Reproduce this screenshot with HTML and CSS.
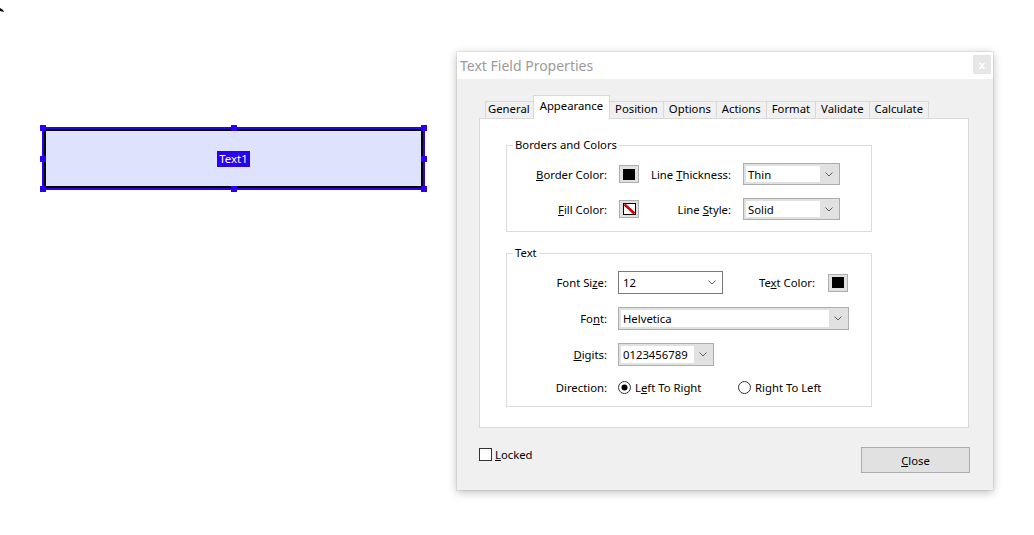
FILE: index.html
```html
<!DOCTYPE html>
<html>
<head>
<meta charset="utf-8">
<title>Text Field Properties</title>
<link rel="stylesheet" href="styles.css">
</head>
<body>
<div class="page">
  <svg class="cursor" width="5" height="5" viewBox="0 0 5 5"><polygon points="0,0 3,2 4,4 0,3" fill="#000"/></svg>

  <div class="field">
    <div class="field-inner"><span class="field-label">Text1</span></div>
    <span class="handle h-tl"></span><span class="handle h-tc"></span><span class="handle h-tr"></span>
    <span class="handle h-ml"></span><span class="handle h-mr"></span>
    <span class="handle h-bl"></span><span class="handle h-bc"></span><span class="handle h-br"></span>
  </div>

  <div class="dialog">
    <div class="titlebar">
      <span class="title">Text Field Properties</span>
      <span class="xbtn">x</span>
    </div>
    <div class="dlg-body">
      <div class="tabs">
        <span class="tab first">General</span>
        <span class="tab active">Appearance</span>
        <span class="tab">Position</span>
        <span class="tab">Options</span>
        <span class="tab">Actions</span>
        <span class="tab">Format</span>
        <span class="tab">Validate</span>
        <span class="tab">Calculate</span>
      </div>
      <div class="panel">
        <fieldset class="group g1">
          <legend>Borders and Colors</legend>
          <div class="grid1">
            <span class="lbl"><u>B</u>order Color:</span>
            <span class="swatch"><span class="chip"></span></span>
            <span class="lbl">Line <u>T</u>hickness:</span>
            <span class="combo"><span class="val">Thin</span><span class="arrow"><svg width="8" height="5" viewBox="0 0 8 5"><polyline points="0.5,0.5 4,4 7.5,0.5" fill="none" stroke="#606060" stroke-width="1"/></svg></span></span>

            <span class="lbl"><u>F</u>ill Color:</span>
            <span class="swatch"><svg width="13" height="12" viewBox="0 0 13 12"><rect x="0.5" y="0.5" width="12" height="11" fill="#fff" stroke="#000"/><line x1="1.5" y1="1.5" x2="11.5" y2="10.5" stroke="#d40000" stroke-width="2.6"/></svg></span>
            <span class="lbl">Line <u>S</u>tyle:</span>
            <span class="combo"><span class="val">Solid</span><span class="arrow"><svg width="8" height="5" viewBox="0 0 8 5"><polyline points="0.5,0.5 4,4 7.5,0.5" fill="none" stroke="#606060" stroke-width="1"/></svg></span></span>
          </div>
        </fieldset>

        <fieldset class="group g2">
          <legend>Text</legend>
          <div class="grid2">
            <span class="lbl">Font Si<u>z</u>e:</span>
            <div class="rowc">
              <span class="combo edit size"><span class="val">12</span><span class="arrow"><svg width="8" height="5" viewBox="0 0 8 5"><polyline points="0.5,0.5 4,4 7.5,0.5" fill="none" stroke="#606060" stroke-width="1"/></svg></span></span>
              <span class="lbl tc">Te<u>x</u>t Color:</span>
              <span class="swatch"><span class="chip"></span></span>
            </div>

            <span class="lbl">Fo<u>n</u>t:</span>
            <span class="combo font"><span class="val">Helvetica</span><span class="arrow"><svg width="8" height="5" viewBox="0 0 8 5"><polyline points="0.5,0.5 4,4 7.5,0.5" fill="none" stroke="#606060" stroke-width="1"/></svg></span></span>

            <span class="lbl"><u>D</u>igits:</span>
            <div class="rowc">
              <span class="combo digits"><span class="val">0123456789</span><span class="arrow"><svg width="8" height="5" viewBox="0 0 8 5"><polyline points="0.5,0.5 4,4 7.5,0.5" fill="none" stroke="#606060" stroke-width="1"/></svg></span></span>
            </div>

            <span class="lbl">Direction:</span>
            <div class="rowc">
              <span class="opt first"><svg width="13" height="13" viewBox="0 0 13 13"><circle cx="6.5" cy="6.5" r="6" fill="#fff" stroke="#333"/><circle cx="6.5" cy="6.5" r="3" fill="#000"/></svg><span>L<u>e</u>ft To Right</span></span>
              <span class="opt"><svg width="13" height="13" viewBox="0 0 13 13"><circle cx="6.5" cy="6.5" r="6" fill="#fff" stroke="#333"/></svg><span>Ri<u>g</u>ht To Left</span></span>
            </div>
          </div>
        </fieldset>
      </div>
      <div class="footer">
        <span class="check"><span class="box"></span><span><u>L</u>ocked</span></span>
        <span class="btn"><span><u>C</u>lose</span></span>
      </div>
    </div>
  </div>
</div>
</body>
</html>
```

FILE: styles.css
```css
* { box-sizing: border-box; }
html, body { margin: 0; padding: 0; background: #fff; }
body {
  font-family: "Noto Sans", "DejaVu Sans", sans-serif;
  font-size: 11.3px;
  color: #000;
}
u { text-decoration: underline; text-underline-offset: 1px; }

.page { position: relative; width: 1034px; height: 535px; overflow: hidden; }
.cursor { position: absolute; left: 0; top: 8px; }

/* form field on the canvas */
.field {
  position: absolute;
  left: 42px; top: 127px;
  width: 383px; height: 63px;
  border: 2px solid #2a00f0;
}
.field-inner {
  width: 100%; height: 100%;
  border: 2px solid #000;
  background: #dee2fd;
  display: flex; align-items: center; justify-content: center;
}
.field-label {
  background: #2a00f0; color: #fff;
  font-size: 11.5px; line-height: 16px; padding: 0 2px;
}
.handle { position: absolute; width: 6px; height: 6px; background: #2a00f0; }
.h-tl { left: -4px; top: -4px; }
.h-tc { left: calc(50% - 3px); top: -4px; }
.h-tr { right: -4px; top: -4px; }
.h-ml { left: -4px; top: calc(50% - 3px); }
.h-mr { right: -4px; top: calc(50% - 3px); }
.h-bl { left: -4px; bottom: -4px; }
.h-bc { left: calc(50% - 3px); bottom: -4px; }
.h-br { right: -4px; bottom: -4px; }

/* dialog window */
.dialog {
  position: absolute;
  left: 457px; top: 52px;
  width: 536px; height: 438px;
  background: #f0f0f0;
  box-shadow: 0 0 0 1px rgba(0,0,0,0.06), 0 2px 9px rgba(0,0,0,0.28);
  display: flex; flex-direction: column;
}
.titlebar {
  height: 27px; background: #fff;
  display: flex; align-items: center;
  padding: 0 2px 0 3px;
}
.title { font-size: 14px; color: #9b9b9b; line-height: 20px; }
.xbtn {
  margin-left: auto; align-self: flex-start; margin-top: 3px;
  width: 18px; height: 19px; background: #e6e6e6;
  color: #fff; font-size: 11px; font-weight: bold;
  display: flex; align-items: center; justify-content: center;
  line-height: 1;
}
.dlg-body { padding: 16px 24px 0 22px; display: flex; flex-direction: column; }

.tabs { display: flex; align-items: flex-end; height: 23px; padding-left: 6px; }
.tab {
  height: 17px; line-height: 14px;
  border: 1px solid #d9d9d9; border-bottom: 0;
  padding: 0 5px; background: #f0f0f0;
  margin-left: -1px; white-space: nowrap;
}
.tab.first { margin-left: 0; padding: 0 3px 0 2px; }
.tab.active {
  height: 24px; line-height: 19px;
  background: #fff; padding: 0 6px;
  margin-bottom: -1px; position: relative; z-index: 1;
}

.panel {
  height: 310px; background: #fff;
  border: 1px solid #d9d9d9;
  padding: 18px 0 0 26px;
}
.group {
  margin: 0; padding: 0; min-width: 0;
  width: 366px;
  border: 1px solid #dcdcdc;
}
.group legend { margin-left: 6px; padding: 0 2px; line-height: 16px; }
.g1 { height: 95px; }
.g2 { height: 162px; margin-top: 13px; }

.lbl { text-align: right; white-space: nowrap; }

.grid1 {
  display: grid;
  grid-template-columns: 100px 20px 80px 97px;
  grid-auto-rows: 22px;
  column-gap: 12px; row-gap: 13px;
  align-items: center;
  padding-top: 10px;
}
.grid1 .lbl { padding-top: 1px; }
.grid2 {
  display: grid;
  grid-template-columns: 100px 231px;
  grid-template-rows: 23px 23px 23px 17px;
  column-gap: 11px; row-gap: 13px;
  align-items: center;
  padding-top: 10px;
}
.rowc { display: flex; align-items: center; height: 100%; }

.swatch {
  width: 20px; height: 18px;
  border: 1px solid #adadad; background: #e1e1e1;
  display: flex; align-items: center; justify-content: center;
}
.swatch svg { display: block; }
.chip { width: 12px; height: 11px; background: #000; }

.combo {
  display: flex; height: 100%;
  border: 1px solid #adadad; background: #e1e1e1;
  padding: 2px;
}
.combo .val {
  flex: 1; background: #fff; padding-left: 2px;
  display: flex; align-items: center; white-space: nowrap;
}
.combo .arrow { width: 17px; display: flex; align-items: center; justify-content: center; }
.combo .arrow svg { display: block; }
.combo.edit { border-color: #7a7a7a; background: #fff; }
.combo.size { width: 105px; }
.combo.font { width: 231px; }
.combo.digits { width: 96px; }
.tc { margin-left: auto; margin-right: 13px; }
.rowc .swatch { margin-right: 1px; }

.opt { display: flex; align-items: center; gap: 4px; white-space: nowrap; }
.opt svg { display: block; }
.opt.first { width: 120px; }

.footer {
  margin-top: 19px;
  display: flex; justify-content: space-between; align-items: flex-start;
}
.check { display: flex; align-items: center; gap: 3px; margin-top: 1px; line-height: 13px; }
.check .box { width: 13px; height: 13px; border: 1px solid #333; background: #fff; }
.btn {
  width: 109px; height: 26px; margin-right: -1px;
  border: 1px solid #adadad; background: #e1e1e1;
  display: flex; align-items: center; justify-content: center;
}
```
